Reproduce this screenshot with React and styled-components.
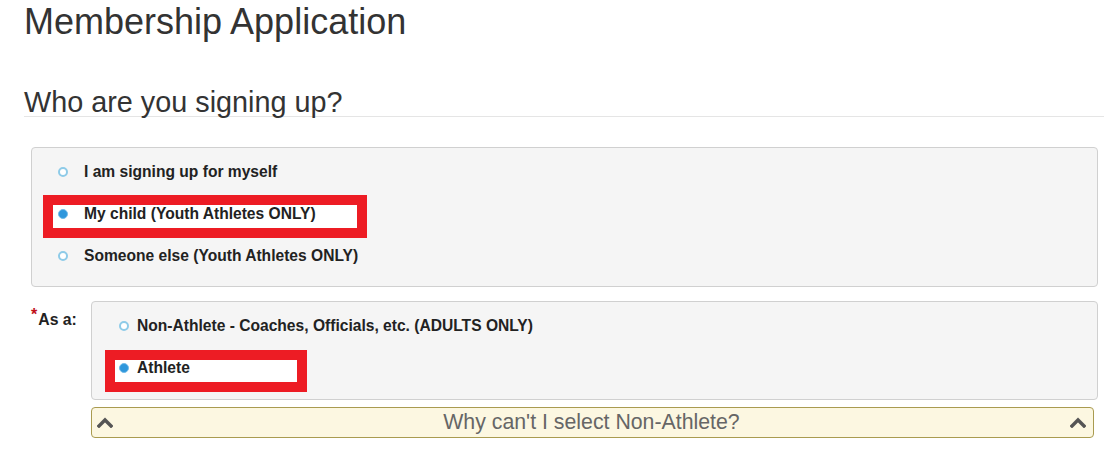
import React from 'react'
import styled, { createGlobalStyle } from 'styled-components'

const GlobalStyle = createGlobalStyle`
    body {
        margin: 0;
        background: #fff;
        font-family: "Liberation Sans", Arial, sans-serif;
        color: #333;
    }
`;

const Page = styled.div`
    width: 1080px;
    padding-left: 24px;
`;

const Title = styled.h1`
    margin: 2px 0 0;
    font-size: 36px;
    line-height: 40px;
    font-weight: normal;
    color: #333;
`;

const Legend = styled.div`
    margin-top: 46px;
    font-size: 28.8px;
    line-height: 28px;
    color: #333;
    border-bottom: 1px solid #e5e5e5;
`;

const Panel = styled.div`
    background: #f5f5f5;
    border: 1px solid #d0d0d0;
    border-radius: 4px;
    padding: ${({ $pad }) => $pad};
`;

const WhoPanel = styled(Panel)`
    margin: 30px 6px 0 7px;
`;

const Option = styled.div`
    position: relative;
    isolation: isolate;
    display: flex;
    align-items: center;
    gap: ${({ $gap }) => $gap}px;
    height: 42px;
    font-size: 15.6px;
    font-weight: bold;
    color: #222;

    ${({ $box }) => $box && `
        &::before {
            content: '';
            position: absolute;
            z-index: -1;
            left: ${$box.left}px;
            top: ${$box.top}px;
            width: ${$box.width}px;
            height: ${$box.height}px;
            box-sizing: border-box;
            border: 10px solid #ed1c24;
            background: #fff;
        }
    `}
`;

const Radio = styled.span`
    width: 10px;
    height: 10px;
    box-sizing: border-box;
    border-radius: 50%;
    flex-shrink: 0;
    ${({ $checked }) => $checked ? `
        background: #2f97dc;
        border: 1px solid #74bce9;
    ` : `
        background: #fff;
        border: 2px solid #8ecbe8;
    `}
`;

const FieldRow = styled.div`
    display: grid;
    grid-template-columns: 60px 1fr;
    margin: 14px 0 0 7px;
`;

const Label = styled.div`
    padding-top: 10px;
    font-size: 15.8px;
    font-weight: bold;
    color: #222;
`;

const Star = styled.span`
    color: #c0101a;
    font-size: 16px;
    position: relative;
    top: -5px;
    margin-right: 1px;
`;

const FieldBody = styled.div`
    display: flex;
    flex-direction: column;
    gap: 7px;
    margin-right: 6px;
`;

const Notice = styled.div`
    display: flex;
    align-items: center;
    justify-content: space-between;
    height: 31px;
    box-sizing: border-box;
    margin-right: 4px;
    padding: 0 7px 0 5px;
    background: #fcf7e1;
    border: 1px solid #a99b50;
    border-radius: 4px;
    font-size: 21.3px;
    color: #666;
`;

const Chevron = () => (
    <svg width="16" height="11" viewBox="0 0 16 11">
        <polyline points="2,9 8,3 14,9" fill="none" stroke="#555" strokeWidth="3.4" strokeLinecap="square" />
    </svg>
);

const who = [
    { text: 'I am signing up for myself' },
    { text: 'My child (Youth Athletes ONLY)', checked: true, box: { left: -15, top: 2, width: 324, height: 43 } },
    { text: 'Someone else (Youth Athletes ONLY)' },
];

const roles = [
    { text: 'Non-Athlete - Coaches, Officials, etc. (ADULTS ONLY)' },
    { text: 'Athlete', checked: true, box: { left: -14, top: 3, width: 202, height: 42 } },
];

export default function App() {
    return (
        <Page>
            <GlobalStyle />
            <Title>Membership Application</Title>
            <Legend>Who are you signing up?</Legend>

            <WhoPanel $pad="3px 0 9px 26px">
                {who.map((o) => (
                    <Option key={o.text} $gap={16} $box={o.box}>
                        <Radio $checked={o.checked} />
                        {o.text}
                    </Option>
                ))}
            </WhoPanel>

            <FieldRow>
                <Label><Star>*</Star>As a:</Label>
                <FieldBody>
                    <Panel $pad="3px 0 10px 27px">
                        {roles.map((o) => (
                            <Option key={o.text} $gap={8} $box={o.box}>
                                <Radio $checked={o.checked} />
                                {o.text}
                            </Option>
                        ))}
                    </Panel>
                    <Notice>
                        <Chevron />
                        <span>Why can't I select Non-Athlete?</span>
                        <Chevron />
                    </Notice>
                </FieldBody>
            </FieldRow>
        </Page>
    );
}
